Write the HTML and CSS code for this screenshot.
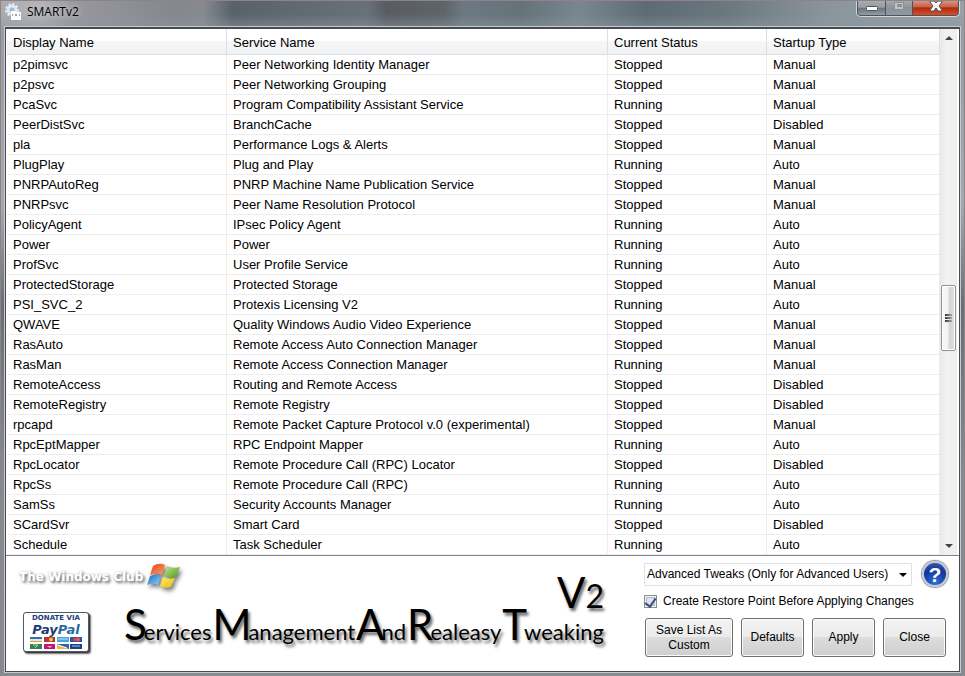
FILE: index.html
```html
<!DOCTYPE html>
<html lang="en">
<head>
<meta charset="utf-8">
<title>SMARTv2</title>
<link rel="stylesheet" href="styles.css">
</head>
<body>
<div class="window">
  <header class="titlebar">
    <svg class="app-icon" width="18" height="18" viewBox="0 0 18 18" aria-hidden="true">
      <circle cx="7" cy="7" r="4" fill="#a9b7c6" stroke="#dbe9f5" stroke-width="3"/>
      <circle cx="7" cy="7" r="6" fill="none" stroke="#e4eff8" stroke-width="2" stroke-dasharray="2 2"/>
      <path d="M6 8h4l1 1h5v8H6z" fill="#fff"/>
      <path d="M7 12h1M10 12h2M14 12h1" stroke="#444"/>
    </svg>
    <h1 class="title">SMARTv2</h1>
    <div class="window-controls">
      <button class="control" type="button" aria-label="Minimize"><svg width="27" height="14" viewBox="0 0 27 14"><rect x="8.500" y="5.500" width="11" height="4" rx="1" fill="#fff" stroke="#4c535d"/></svg></button>
      <button class="control" type="button" aria-label="Maximize" disabled><svg width="26" height="14" viewBox="0 0 26 14"><path d="M8.500 1.500h9v7h-9z" fill="#c0c4c9" stroke="#8b9097"/><path d="M11.500 3.500h4v2h-4z" fill="#949aa2" stroke="#858a92"/></svg></button>
      <button class="control control-close" type="button" aria-label="Close window"><svg width="45" height="14" viewBox="0 0 45 14"><path d="M17 0h4l2 2 2-2h4v1l-3 4 3 4v1h-4l-2-3-2 3h-4v-1l3-4-3-4z" fill="#f8f8f8" stroke="#504b55"/></svg></button>
    </div>
  </header>

  <main class="client">
    <section class="list">
      <table class="services">
        <colgroup><col class="col-display"><col class="col-service"><col class="col-status"><col></colgroup>
        <thead><tr><th>Display Name</th><th>Service Name</th><th>Current Status</th><th>Startup Type</th></tr></thead>
        <tbody>
          <tr><td>p2pimsvc</td><td>Peer Networking Identity Manager</td><td>Stopped</td><td>Manual</td></tr>
          <tr><td>p2psvc</td><td>Peer Networking Grouping</td><td>Stopped</td><td>Manual</td></tr>
          <tr><td>PcaSvc</td><td>Program Compatibility Assistant Service</td><td>Running</td><td>Manual</td></tr>
          <tr><td>PeerDistSvc</td><td>BranchCache</td><td>Stopped</td><td>Disabled</td></tr>
          <tr><td>pla</td><td>Performance Logs &amp; Alerts</td><td>Stopped</td><td>Manual</td></tr>
          <tr><td>PlugPlay</td><td>Plug and Play</td><td>Running</td><td>Auto</td></tr>
          <tr><td>PNRPAutoReg</td><td>PNRP Machine Name Publication Service</td><td>Stopped</td><td>Manual</td></tr>
          <tr><td>PNRPsvc</td><td>Peer Name Resolution Protocol</td><td>Stopped</td><td>Manual</td></tr>
          <tr><td>PolicyAgent</td><td>IPsec Policy Agent</td><td>Running</td><td>Auto</td></tr>
          <tr><td>Power</td><td>Power</td><td>Running</td><td>Auto</td></tr>
          <tr><td>ProfSvc</td><td>User Profile Service</td><td>Running</td><td>Auto</td></tr>
          <tr><td>ProtectedStorage</td><td>Protected Storage</td><td>Stopped</td><td>Manual</td></tr>
          <tr><td>PSI_SVC_2</td><td>Protexis Licensing V2</td><td>Running</td><td>Auto</td></tr>
          <tr><td>QWAVE</td><td>Quality Windows Audio Video Experience</td><td>Stopped</td><td>Manual</td></tr>
          <tr><td>RasAuto</td><td>Remote Access Auto Connection Manager</td><td>Stopped</td><td>Manual</td></tr>
          <tr><td>RasMan</td><td>Remote Access Connection Manager</td><td>Running</td><td>Manual</td></tr>
          <tr><td>RemoteAccess</td><td>Routing and Remote Access</td><td>Stopped</td><td>Disabled</td></tr>
          <tr><td>RemoteRegistry</td><td>Remote Registry</td><td>Stopped</td><td>Disabled</td></tr>
          <tr><td>rpcapd</td><td>Remote Packet Capture Protocol v.0 (experimental)</td><td>Stopped</td><td>Manual</td></tr>
          <tr><td>RpcEptMapper</td><td>RPC Endpoint Mapper</td><td>Running</td><td>Auto</td></tr>
          <tr><td>RpcLocator</td><td>Remote Procedure Call (RPC) Locator</td><td>Stopped</td><td>Disabled</td></tr>
          <tr><td>RpcSs</td><td>Remote Procedure Call (RPC)</td><td>Running</td><td>Auto</td></tr>
          <tr><td>SamSs</td><td>Security Accounts Manager</td><td>Running</td><td>Auto</td></tr>
          <tr><td>SCardSvr</td><td>Smart Card</td><td>Stopped</td><td>Disabled</td></tr>
          <tr><td>Schedule</td><td>Task Scheduler</td><td>Running</td><td>Auto</td></tr>
        </tbody>
      </table>
      <div class="scrollbar">
        <button class="scroll-arrow" type="button" aria-label="Scroll up"><svg width="8" height="4" viewBox="0 0 8 4"><path d="M0 4l4-4 4 4z" fill="#444"/></svg></button>
        <div class="scroll-track"><div class="scroll-thumb"><i></i><i></i><i></i></div></div>
        <button class="scroll-arrow" type="button" aria-label="Scroll down"><svg width="8" height="4" viewBox="0 0 8 4"><path d="M0 0l4 4 4-4z" fill="#444"/></svg></button>
      </div>
    </section>

    <footer class="footer">
      <div class="brands">
        <a class="club" href="#">The Windows Club
          <svg width="38" height="30" viewBox="0 0 38 30" aria-hidden="true">
            <defs>
              <linearGradient id="red" x2="1" y2="1"><stop stop-color="#e8401c"/><stop offset="1" stop-color="#f9a366"/></linearGradient>
              <linearGradient id="green" x2="1" y2="1"><stop stop-color="#c3e58b"/><stop offset="1" stop-color="#4d9c1b"/></linearGradient>
              <linearGradient id="blue" x2="1" y2="1"><stop stop-color="#1b62c4"/><stop offset="1" stop-color="#8fdcfb"/></linearGradient>
              <linearGradient id="yellow" x2="1" y2="1"><stop stop-color="#fff06b"/><stop offset="1" stop-color="#e9b511"/></linearGradient>
            </defs>
            <path d="M6 4q6-4 12-1l-3 10q-5-3-12 0z" fill="url(#red)"/>
            <path d="M20 4q6 3 13 1l-4 10q-6 2-12-1z" fill="url(#green)"/>
            <path d="M3 14q6-3 11 0l-3 9q-5-3-11 0z" fill="url(#blue)"/>
            <path d="M16 15q6 3 12 1l-4 9q-5 2-11-1z" fill="url(#yellow)"/>
          </svg>
        </a>
        <a class="donate" href="#">
          <span class="donate-via">DONATE VIA</span>
          <span class="donate-name"><b>Pay</b><b class="pal">Pal</b></span>
          <svg width="52" height="12" viewBox="0 0 52 12" aria-hidden="true">
            <path d="M0 0h12v5H0z" fill="#3471a9"/><path d="M0 2h12v2H0z" fill="#dce5e8"/><path d="M0 4h12v1H0z" fill="#dda23e"/>
            <path d="M14 0h11v5H14z" fill="#a63a32"/><circle cx="18" cy="2.500" r="2" fill="#e72629"/><circle cx="21" cy="2.500" r="2" fill="#f2c14a"/>
            <path d="M27 0h12v5H27z" fill="#46a6d7"/><path d="M28 2h10" stroke="#c4e5f2"/>
            <path d="M40 0h12v5H40z" fill="#28579c"/><circle cx="45" cy="2.500" r="2" fill="#e43c46"/><circle cx="48" cy="2.500" r="2" fill="#df5667"/>
            <path d="M0 7h12v5H0z" fill="#377f51"/><path d="M3 8h5l-3 3" stroke="#a4dfaa" fill="none"/>
            <path d="M14 7h11v5H14z" fill="#c11678"/><path d="M17 9h5l-2 2z" fill="#f1a7d1"/>
            <path d="M27 7h12v5H27z" fill="#2e68a4"/><path d="M27 7l12 5H27z" fill="#eeb257"/><path d="M28 8l9 3" stroke="#fff"/>
            <path d="M40 7h12v5H40z" fill="#203f85"/><path d="M42 9h8" stroke="#9cc0e4"/>
          </svg>
        </a>
      </div>

      <div class="wordmark">
        <span class="version">V<small>2</small></span>
        <div class="slogan"><span><b>S</b>ervices</span><span><b>M</b>anagement</span><span><b>A</b>nd</span><span><b>R</b>ealeasy</span><span><b>T</b>weaking</span></div>
      </div>

      <form class="actions">
        <div class="preset-row">
          <select class="preset" aria-label="Tweak preset"><option>Advanced Tweaks (Only for Advanced Users)</option></select>
          <button class="help" type="button" aria-label="Help">?</button>
        </div>
        <label class="restore"><input type="checkbox" checked>Create Restore Point Before Applying Changes</label>
        <div class="buttons">
          <button class="btn btn-wide" type="button">Save List As Custom</button>
          <button class="btn" type="button">Defaults</button>
          <button class="btn" type="button">Apply</button>
          <button class="btn" type="button">Close</button>
        </div>
      </form>
    </footer>
  </main>
</div>
</body>
</html>
```
FILE: styles.css
```css
* { box-sizing: border-box; }

body {
  margin: 0;
  font: 13px/20px "Liberation Sans", Arial, sans-serif;
  color: #000;
}

button, select, input { font: inherit; color: inherit; margin: 0; padding: 0; }

.window {
  display: flex;
  flex-direction: column;
  min-height: 100vh;
  padding: 0 4px 4px;
  border: 1px solid #8f8384;
  border-bottom: 0;
  background: linear-gradient(#959aa1, #a3a6ab 25%, #a6a9ae 30%, #696e75 45%, #858a92 70%, #868a91);
}

.titlebar {
  display: flex;
  align-items: flex-start;
  height: 26px;
  margin: 0 -4px;
  padding-left: 4px;
  background:
    linear-gradient(rgba(140, 150, 158, 0) 50%, rgba(140, 150, 158, .5)),
    linear-gradient(90deg, #a9abb0 0, #b4b5b9 4%, #96989e 8%, #85878e 18%, #868a91 21%, #59626b 24%, #606972 30%, #68717a 38%, #595d63 40%, #5e646a 46%, #6c7982 48%, #65727a 54%, #788790 60%, #5d6b74 67%, #6a777f 75%, #8b959c 86%, #98a1a8);
}

.app-icon { margin-top: 2px; }

.title {
  flex: 1;
  margin: 0 0 0 4px;
  font: 12px/21px "Open Sans", "Noto Sans", sans-serif;
  text-shadow: 0 0 5px #c6c8cc, 0 0 8px #b5b8bd;
}

.window-controls {
  display: flex;
  margin-right: 4px;
  border: 1px solid #d3d6da;
  border-top: 0;
  border-radius: 0 0 5px 5px;
  overflow: hidden;
}

.control {
  display: flex;
  border: 1px solid #4c535b;
  border-width: 0 1px 1px 0;
  background: linear-gradient(#a8adb3 0, #969ca3 45%, #6b747d 50%, #929aa2);
}

.control:first-child { border-left-width: 1px; border-radius: 0 0 0 4px; }
.control:last-child { border-radius: 0 0 4px; }
.control:disabled { background: linear-gradient(#a5aaaf, #8a9299 50%, #9299a1); }
.control-close { background: linear-gradient(#d89483, #c96249 40%, #b3290c 50%, #d2522c); }

.client {
  flex: 1;
  display: flex;
  flex-direction: column;
  border: 1px solid #464b54;
  border-top-width: 2px;
  outline: 1px solid #c5cace;
  background: #fff;
}

.list {
  display: flex;
  padding: 0 2px 0 1px;
  border-bottom: 1px solid #83828e;
}

.services {
  flex: 1;
  min-width: 0;
  table-layout: fixed;
  border-collapse: separate;
  border-spacing: 0;
}

.col-display { width: 220px; }
.col-service { width: 381px; }
.col-status { width: 159px; }

.services th, .services td {
  height: 20px;
  padding: 0 6px;
  border-right: 1px solid #ededed;
  border-bottom: 1px solid #ededed;
  font-weight: 400;
  line-height: 19px;
  text-align: left;
  white-space: nowrap;
}

.services th {
  height: 26px;
  padding-top: 2px;
  border-color: #dcdee1;
  background: linear-gradient(#fff 45%, #f5f6f8 50%, #f1f2f4);
}

.scrollbar {
  display: flex;
  flex-direction: column;
  width: 17px;
  padding-left: 1px;
  background: linear-gradient(90deg, #e9e9e9, #f2f2f2 40%, #eee);
}

.scroll-arrow {
  display: flex;
  align-items: center;
  justify-content: center;
  height: 18px;
  border: 0;
  background: none;
}

.scroll-track {
  flex: 1;
  display: flex;
  flex-direction: column;
}

.scroll-track::before { content: ""; flex: 238; }
.scroll-track::after { content: ""; flex: 186; }

.scroll-thumb {
  display: flex;
  flex-direction: column;
  align-items: center;
  justify-content: center;
  gap: 1px;
  height: 66px;
  margin-right: 1px;
  border: 1px solid #929292;
  border-radius: 2px;
  box-shadow: inset 0 0 0 1px #fff;
  background: linear-gradient(90deg, #f5f5f5 40%, #d4d4d8 60%, #e0e0e0);
}

.scroll-thumb i {
  width: 7px;
  height: 2px;
  background: linear-gradient(90deg, #333, #aaa);
}

.footer {
  flex: 1;
  display: flex;
  align-items: flex-start;
}

.brands {
  width: 118px;
  padding: 6px 0 0 13px;
  white-space: nowrap;
}

.club {
  display: flex;
  align-items: center;
  gap: 4px;
  width: 168px;
  color: #fff;
  font: 700 12px/30px "DejaVu Sans", sans-serif;
  text-decoration: none;
  text-shadow: 0 0 1px #ccc, 2px 2px 3px #777, 1px 1px 3px #999;
}

.club svg { flex: none; filter: drop-shadow(2px 3px 2px #777); }

.donate {
  display: flex;
  flex-direction: column;
  align-items: center;
  width: 66px;
  height: 40px;
  margin: 20px 0 0 4px;
  padding-top: 1px;
  border: 1px solid #4e596b;
  border-radius: 3px;
  box-shadow: 1px 1px 1px #333, 2px 2px 2px #777;
  background: #fff;
  color: #1c3c78;
  text-decoration: none;
}

.donate-via { font: 700 7px/9px "DejaVu Sans", sans-serif; }
.donate-name { font: italic 700 13px/14px "DejaVu Sans", sans-serif; }
.pal { color: #2a6aa5; }

.wordmark {
  flex: 1;
  padding-top: 18px;
  font: 22px/32px Lato, "Open Sans", sans-serif;
  text-shadow: 2px 3px 3px #666;
  white-space: nowrap;
}

.version {
  display: block;
  width: 480px;
  text-align: right;
  font-size: 42px;
  line-height: 36px;
}

.version small { font-size: 32px; }

.slogan {
  display: flex;
  width: 480px;
  justify-content: space-between;
  line-height: 20px;
}

.slogan b { margin-right: -3px; font-size: 42px; font-weight: 400; }

.actions {
  width: 304px;
  margin-right: 11px;
  padding-top: 5px;
  font-size: 12px;
}

.preset-row {
  position: relative;
  display: flex;
  align-items: center;
  justify-content: space-between;
}

.preset {
  appearance: none;
  width: 268px;
  height: 23px;
  padding: 0 20px 2px 2px;
  border: 1px solid #dfe0e8;
  border-radius: 1px;
  background: #fff;
}

.preset-row::after {
  content: "";
  position: absolute;
  right: 41px;
  top: 12px;
  border: 4px solid transparent;
  border-top-color: #000;
  border-bottom: 0;
  pointer-events: none;
}

.help {
  width: 26px;
  height: 26px;
  border: 2px solid #c4c8d1;
  border-radius: 50%;
  box-shadow: 0 0 1px 1px #9094a0;
  background: radial-gradient(circle at 50% 90%, #2d6ee0, #123696 60%, #4567bb);
  color: #fff;
  font: 700 21px/21px "Liberation Sans", Arial, sans-serif;
}

.restore {
  display: flex;
  align-items: center;
  gap: 6px;
  margin-top: 4px;
  white-space: nowrap;
}

.restore input {
  appearance: none;
  display: flex;
  justify-content: center;
  width: 13px;
  height: 13px;
  border: 1px solid #8e8f8f;
  box-shadow: inset 0 0 0 1px #f4f4f4, inset 0 0 0 2px #b4bbc7;
  background: #dee2ea;
}

.restore input:checked::before {
  content: "";
  width: 5px;
  height: 9px;
  border: solid #3c4f8b;
  border-width: 0 2px 2px 0;
  transform: rotate(35deg);
}

.buttons {
  display: flex;
  gap: 8px;
  margin: 7px 0 0 1px;
}

.btn {
  width: 63px;
  height: 39px;
  border: 1px solid #707070;
  border-radius: 3px;
  box-shadow: inset 0 0 0 1px #fafafa;
  background: linear-gradient(#f2f2f2, #ebebeb 49%, #dcdcdc 50%, #cfcfcf);
  line-height: 15px;
}

.btn-wide { width: 88px; padding: 0 8px; }
```
